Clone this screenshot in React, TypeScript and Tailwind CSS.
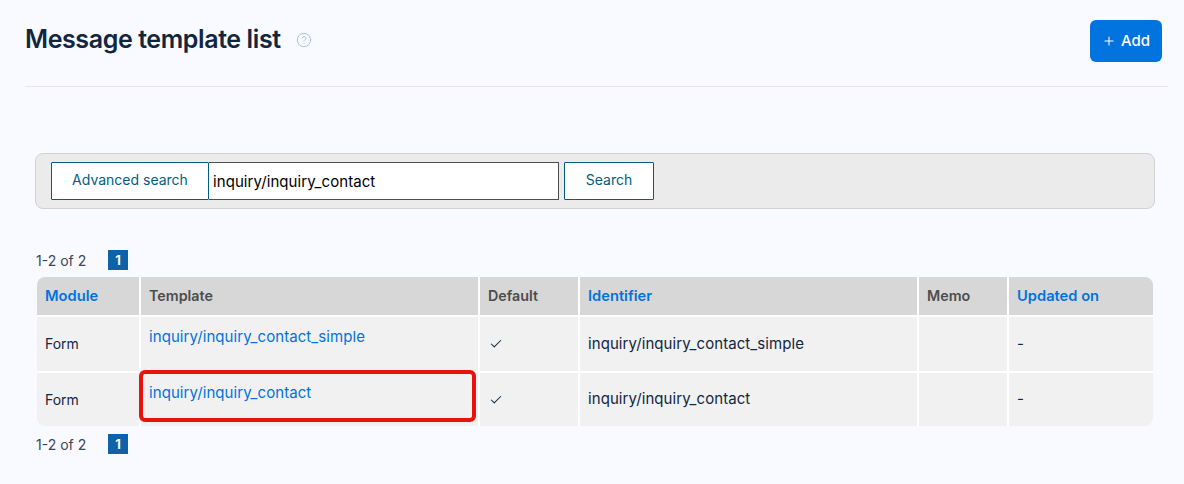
import React from 'react';
import { Check, CircleHelp, Plus } from 'lucide-react';

const font = "font-['Inter','Liberation_Sans',sans-serif]";

const rows = [
  { module: 'Form', template: 'inquiry/inquiry_contact_simple', identifier: 'inquiry/inquiry_contact_simple', height: 'h-[54px]' },
  { module: 'Form', template: 'inquiry/inquiry_contact', identifier: 'inquiry/inquiry_contact', height: 'h-[53px]' },
];

function Pager() {
  return (
    <div className="flex items-center h-5 pl-[36px] text-sm text-[#3c4650]">
      <span className="w-[72px] pt-[2px]">1-2 of 2</span>
      <span className="w-5 h-5 flex items-center justify-center bg-[#0f62a8] text-[13px] text-white font-bold">1</span>
    </div>
  );
}

function Head({ label, link }: { label: string; link?: boolean }) {
  return (
    <div className={`bg-[#d7d7d7] h-[38px] flex items-center pl-2 font-semibold ${link ? 'text-[14.7px] text-[#0073de]' : 'text-[14.3px] text-[#4d4d4d]'}`}>
      {label}
    </div>
  );
}

export default function App() {
  return (
    <div className={`w-[1184px] h-[484px] overflow-hidden bg-[#f9faff] ${font}`}>
      {/* ヘッダー */}
      <div className="ml-[25px] mr-4 h-[87px] border-b border-[#dfe8f2] flex items-start justify-between pt-5 pr-[6px]">
        <div className="flex items-center h-[38px]">
          <h1 className="text-[25px] font-semibold pt-[2px] text-[#12263f] tracking-[-0.4px]">Message template list</h1>
          <CircleHelp className="ml-[15px] mt-[2px] text-[#a9c1da]" size={16} strokeWidth={1.5} />
        </div>
        <button className="w-[72px] h-[42px] rounded-md bg-[#0073de] text-white text-[15px] font-medium flex items-center justify-center gap-[5px]">
          <Plus size={14} strokeWidth={1.75} />
          Add
        </button>
      </div>

      {/* 検索 */}
      <div className="mt-[66px] ml-[35px] w-[1120px] h-14 bg-[#ebebeb] border border-[#d2d2d2] rounded-lg flex items-center pl-[15px]">
        <button className="w-[158px] h-[38px] bg-white border border-[#005f7f] rounded-[1px] text-sm text-[#005f7f] pb-[3px]">
          Advanced search
        </button>
        <input
          readOnly
          value="inquiry/inquiry_contact"
          className="w-[350px] h-[38px] bg-white border border-[#4d4d4d] border-l-0 rounded-r-[1px] pl-1 text-[15px] tracking-[0.08px] text-black outline-none"
        />
        <button className="ml-[5px] w-[90px] h-[38px] bg-white border border-[#005f7f] rounded-[1px] text-sm text-[#005f7f] pb-[3px]">
          Search
        </button>
      </div>

      <div className="mt-[41px]">
        <Pager />
      </div>

      {/* テーブル */}
      <div className="relative mt-[7px] ml-[37px] w-[1116px]">
        <div className="grid grid-cols-[102px_337px_98px_337px_88px_144px] gap-[2px] bg-white rounded-lg overflow-hidden">
          <Head label="Module" link />
          <Head label="Template" />
          <Head label="Default" />
          <Head label="Identifier" link />
          <Head label="Memo" />
          <Head label="Updated on" link />
          {rows.map((row) => (
            <React.Fragment key={row.template}>
              <div className={`bg-[#f1f1f1] ${row.height} flex items-center pl-2 text-sm text-[#12263f]`}>{row.module}</div>
              <div className={`bg-[#f1f1f1] ${row.height} pl-2 pt-[9px] text-[15px] tracking-[0.08px] text-[#0073de]`}>{row.template}</div>
              <div className={`bg-[#f1f1f1] ${row.height} flex items-center pl-[9px] text-[#12263f]`}>
                <Check size={14} strokeWidth={1.75} />
              </div>
              <div className={`bg-[#f1f1f1] ${row.height} flex items-center pl-2 text-[15px] tracking-[0.08px] text-[#12263f]`}>{row.identifier}</div>
              <div className={`bg-[#f1f1f1] ${row.height}`} />
              <div className={`bg-[#f1f1f1] ${row.height} flex items-center pl-2 text-[15px] text-[#12263f]`}>-</div>
            </React.Fragment>
          ))}
        </div>
        {/* 赤枠の注釈 */}
        <div className="absolute left-[102px] top-[93px] w-[337px] h-[52px] border-4 border-[#e8140c] rounded-md" />
      </div>

      <div className="mt-2">
        <Pager />
      </div>
    </div>
  );
}
